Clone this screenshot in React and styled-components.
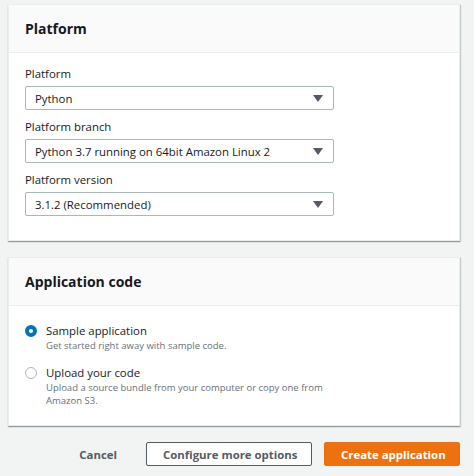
import React from 'react';
import styled, { createGlobalStyle } from 'styled-components';

const Global = createGlobalStyle`
  html, body {
    margin: 0;
    padding: 0;
    background: #f2f3f3;
    font-family: 'Open Sans', 'Noto Sans', sans-serif;
    color: #16191f;
  }
`

const Page = styled.div`
  width: 474px;
  height: 476px;
  box-sizing: border-box;
  padding: 4px 14px 0 8px;
  display: flex;
  flex-direction: column;
  gap: 16px;
`

const Card = styled.section`
  background: #fff;
  border: 1px solid #eaeded;
  box-shadow: 0 1px 1px 0 rgba(0, 28, 36, 0.3), 1px 1px 1px 0 rgba(0, 28, 36, 0.15);
  height: ${({ h }) => h}px;
  box-sizing: border-box;
`

const CardHead = styled.header`
  background: #fafafa;
  border-bottom: 1px solid #eaeded;
  height: 48px;
  box-sizing: border-box;
  display: flex;
  align-items: center;
  padding-left: 16px;
  font-size: 14px;
  font-weight: 700;
`

const CardBody = styled.div`
  padding: ${({ pad }) => pad};
  display: flex;
  flex-direction: column;
`

const Label = styled.div`
  font-size: 11.4px;
  line-height: 16px;
  margin: 9px 0 4px;
  &:first-child { margin-top: 0; }
`

const Select = styled.div`
  width: 309px;
  height: 24px;
  box-sizing: border-box;
  border: 1px solid #aab7b8;
  border-radius: 2px;
  display: flex;
  align-items: center;
  justify-content: space-between;
  padding: 0 10px 0 9px;
  font-size: 11.4px;

  svg { display: block; }
`

const Option = styled.div`
  display: flex;
  gap: 9px;
  margin-bottom: 12px;
`

const Radio = styled.span`
  width: 12px;
  height: 12px;
  margin-top: 3px;
  flex: none;
  border-radius: 50%;
  box-sizing: border-box;
  border: ${({ on }) => (on ? '4px solid #0073bb' : '1px solid #aab7b8')};
  background: #fff;
`

const OptTitle = styled.div`
  font-size: 11.4px;
  line-height: 17px;
`

const OptHint = styled.div`
  font-size: 9.5px;
  line-height: 13px;
  color: #687078;
  width: 285px;
`

const Actions = styled.div`
  display: flex;
  justify-content: flex-end;
  align-items: center;
  gap: 12px;
`

const Button = styled.button`
  font-family: inherit;
  font-size: 11.4px;
  font-weight: 700;
  white-space: nowrap;
  height: 24px;
  width: ${({ w }) => (w ? `${w}px` : 'auto')};
  padding: 0 16px;
  border-radius: 2px;
  cursor: pointer;
  border: 1px solid ${({ kind }) => (kind === 'primary' ? '#ec7211' : kind === 'normal' ? '#545b64' : 'transparent')};
  background: ${({ kind }) => (kind === 'primary' ? '#ec7211' : kind === 'normal' ? '#fff' : 'transparent')};
  color: ${({ kind }) => (kind === 'primary' ? '#fff' : '#545b64')};
`

const Caret = () => (
  <svg width="10" height="7" viewBox="0 0 10 7">
    <path d="M0 0h10L5 7z" fill="#545b64" />
  </svg>
)

function Dropdown ({ value }) {
  return (
    <Select>
      <span>{value}</span>
      <Caret />
    </Select>
  )
}

export default function App () {
  return (
    <Page>
      <Global />
      <Card h={237}>
        <CardHead>Platform</CardHead>
        <CardBody pad="13px 16px">
          <Label>Platform</Label>
          <Dropdown value="Python" />
          <Label>Platform branch</Label>
          <Dropdown value="Python 3.7 running on 64bit Amazon Linux 2" />
          <Label>Platform version</Label>
          <Dropdown value="3.1.2 (Recommended)" />
        </CardBody>
      </Card>
      <Card h={169}>
        <CardHead>Application code</CardHead>
        <CardBody pad="16px 16px">
          <Option>
            <Radio on />
            <div>
              <OptTitle>Sample application</OptTitle>
              <OptHint>Get started right away with sample code.</OptHint>
            </div>
          </Option>
          <Option>
            <Radio />
            <div>
              <OptTitle>Upload your code</OptTitle>
              <OptHint>Upload a source bundle from your computer or copy one from Amazon S3.</OptHint>
            </div>
          </Option>
        </CardBody>
      </Card>
      <Actions>
        <Button>Cancel</Button>
        <Button kind="normal" w={166}>Configure more options</Button>
        <Button kind="primary" w={136}>Create application</Button>
      </Actions>
    </Page>
  )
}
